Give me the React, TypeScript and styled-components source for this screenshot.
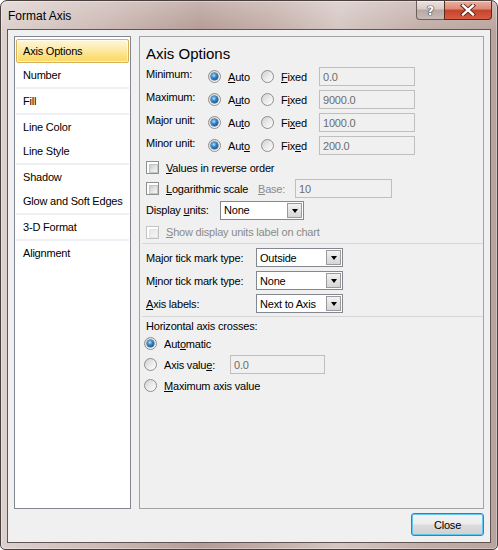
import React from 'react';
import styled, { createGlobalStyle } from 'styled-components';

const GlobalStyle = createGlobalStyle`
  html, body { margin: 0; padding: 0; background: #ffffff; }
  body {
    font-family: "Liberation Sans", Arial, sans-serif;
    font-size: 11px;
    color: #000;
  }
  * { box-sizing: border-box; }
  u { text-decoration: underline; text-underline-offset: 1px; }
`;

const Window = styled.div`
  width: 498px;
  height: 550px;
  border: 1px solid #4a403e;
  border-radius: 7px 7px 5px 5px;
  background:
    linear-gradient(180deg, rgba(255, 255, 255, 0.25) 0px, rgba(255, 255, 255, 0) 30px),
    linear-gradient(90deg, #ddd1ce 0%, #cdbab5 20%, #b59c96 40%, #c4aea8 55%, #d5c6c2 68%, #c2ada7 85%, #b9a39d 100%);
  padding: 0 6px 6px;
  display: flex;
  flex-direction: column;
  box-shadow: inset 0 0 0 1px rgba(255, 255, 255, 0.35);
  letter-spacing: -0.2px;
`;

const TitleBar = styled.div`
  height: 28px;
  display: flex;
  align-items: flex-start;
  justify-content: space-between;
`;

const Title = styled.div`
  font-size: 12px;
  line-height: 14px;
  margin: 8px 0 0 1px;
  letter-spacing: 0;
  color: #000;
`;

const CaptionButtons = styled.div`
  display: flex;
  margin-right: -1px;
`;

const CaptionButton = styled.div<{ $kind: 'help' | 'close' }>`
  height: 19px;
  width: ${(p) => (p.$kind === 'help' ? 28 : 48)}px;
  display: flex;
  align-items: center;
  justify-content: center;
  border: 1px solid ${(p) => (p.$kind === 'help' ? '#6d5d59' : '#5b2a22')};
  border-top: none;
  ${(p) => (p.$kind === 'help' ? 'border-right: none;' : '')}
  border-radius: ${(p) => (p.$kind === 'help' ? '0 0 0 4px' : '0 0 4px 0')};
  background: ${(p) =>
    p.$kind === 'help'
      ? 'linear-gradient(180deg, #ebe3e1 0%, #d8ccc9 45%, #b6a7a3 50%, #c8bcb8 100%)'
      : 'linear-gradient(180deg, #eab0a2 0%, #dc8a77 45%, #c7432c 50%, #d55c43 100%)'};
  box-shadow: inset 0 1px 0 rgba(255, 255, 255, 0.5);
`;

const HelpGlyph = styled.span`
  font-family: "DejaVu Sans", sans-serif;
  font-weight: bold;
  font-size: 13px;
  line-height: 13px;
  color: #fff;
  text-shadow: 0 0 1px #333, 0 0 1px #333, 0 0 1px #333;
`;

const Client = styled.div`
  flex: 1;
  background: #f0f0f0;
  border: 1px solid #5f5654;
  padding: 6px;
  display: flex;
  flex-direction: column;
  gap: 4px;
`;

const Panes = styled.div`
  flex: 1;
  display: flex;
  gap: 8px;
  min-height: 0;
`;

const CategoryList = styled.div`
  width: 117px;
  border: 1px solid #828790;
  background: #fff;
  padding: 2px 1px;
  display: flex;
  flex-direction: column;
`;

const CategoryItem = styled.div<{ $selected?: boolean }>`
  height: 24px;
  display: flex;
  align-items: center;
  padding-left: 6px;
  border: 1px solid ${(p) => (p.$selected ? '#d9b257' : 'transparent')};
  border-radius: 2px;
  background: ${(p) =>
    p.$selected
      ? 'linear-gradient(180deg, #fef7d8 0%, #fdeaa6 45%, #fcde7a 75%, #fbd865 100%)'
      : 'transparent'};
  box-shadow: ${(p) => (p.$selected ? 'inset 0 0 0 1px rgba(255,255,255,0.6)' : 'none')};
`;

const ListSeparator = styled.div`
  height: 2px;
  background: #eceff3;
`;

const OptionsPane = styled.div`
  flex: 1;
  border: 1px solid #a3a3a3;
  padding: 0 6px;
  display: flex;
  flex-direction: column;
`;

const Heading = styled.div`
  margin-top: 6px;
  height: 22px;
  line-height: 22px;
  font-size: 15px;
  letter-spacing: 0;
`;

const Row = styled.div<{ $h: number }>`
  height: ${(p) => p.$h}px;
  display: flex;
  align-items: center;
`;

const FieldLabel = styled.div<{ $w: number; $raise?: boolean; $disabled?: boolean }>`
  width: ${(p) => p.$w}px;
  flex: none;
  white-space: nowrap;
  color: ${(p) => (p.$disabled ? '#8a8a8a' : '#000')};
  margin-bottom: ${(p) => (p.$raise ? 6 : 0)}px;
`;

const Option = styled.label<{ $w?: number; $shift?: number; $disabled?: boolean }>`
  display: flex;
  align-items: center;
  gap: 7px;
  ${(p) => (p.$w ? `width: ${p.$w}px; flex: none;` : '')}
  margin-left: ${(p) => p.$shift ?? 0}px;
  white-space: nowrap;
  color: ${(p) => (p.$disabled ? '#8a8a8a' : '#000')};
`;

const Radio = styled.span<{ $checked?: boolean }>`
  width: 13px;
  height: 13px;
  flex: none;
  border-radius: 50%;
  border: 1px solid #8e8f8f;
  background: linear-gradient(135deg, #cfd0d1 0%, #e9eaea 50%, #ffffff 100%);
  display: flex;
  align-items: center;
  justify-content: center;
  &::after {
    content: '';
    display: ${(p) => (p.$checked ? 'block' : 'none')};
    width: 7px;
    height: 7px;
    border-radius: 50%;
    background: radial-gradient(circle at 40% 35%, #bfe6fb 0%, #3a8fd4 35%, #14508f 75%, #0b3566 100%);
    box-shadow: 0 0 0 0.5px #1d4f80;
  }
`;

const Checkbox = styled.span<{ $disabled?: boolean }>`
  width: 13px;
  height: 13px;
  flex: none;
  border: 1px solid ${(p) => (p.$disabled ? '#c4c4c4' : '#8e8f8f')};
  background: #fff;
  padding: 2px;
  &::after {
    content: '';
    display: block;
    width: 100%;
    height: 100%;
    background: ${(p) =>
      p.$disabled
        ? 'linear-gradient(135deg, #e6e6e6, #f7f7f7)'
        : 'linear-gradient(135deg, #c9cacb 0%, #e2e3e4 50%, #f6f6f6 100%)'};
    border: 1px solid ${(p) => (p.$disabled ? '#e4e4e4' : '#c4c5c6')};
  }
`;

const TextField = styled.div<{ $w: number }>`
  width: ${(p) => p.$w}px;
  height: 19px;
  flex: none;
  border: 1px solid #bfbfbf;
  background: #f0f0f0;
  color: #6d6d6d;
  padding-left: 3px;
  display: flex;
  align-items: center;
`;

const Select = styled.div<{ $w: number }>`
  width: ${(p) => p.$w}px;
  height: 19px;
  flex: none;
  border: 1px solid #828790;
  background: #fff;
  display: flex;
  align-items: center;
  padding: 1px;
`;

const SelectText = styled.div`
  flex: 1;
  padding-left: 2px;
  white-space: nowrap;
  overflow: hidden;
`;

const SelectArrow = styled.div`
  width: 15px;
  height: 15px;
  flex: none;
  border: 1px solid #9a9a9a;
  background: linear-gradient(180deg, #f3f3f3 0%, #e3e3e3 50%, #d6d6d6 100%);
  display: flex;
  align-items: center;
  justify-content: center;
  &::after {
    content: '';
    width: 0;
    height: 0;
    border-left: 3.5px solid transparent;
    border-right: 3.5px solid transparent;
    border-top: 4px solid #000;
    margin-top: 1px;
  }
`;

const PaneSeparator = styled.div<{ $mt: number; $mb: number }>`
  height: 0;
  border-top: 1px solid #d6d6d6;
  margin: ${(p) => p.$mt}px -6px ${(p) => p.$mb}px -4px;
`;

const GroupCaption = styled.div`
  height: 16px;
  line-height: 13px;
  display: flex;
  align-items: flex-end;
`;

const Footer = styled.div`
  display: flex;
  justify-content: flex-end;
`;

const DialogButton = styled.button`
  width: 73px;
  height: 23px;
  border: 1px solid #3c7fb1;
  border-radius: 3px;
  background: linear-gradient(180deg, #f4f4f4 0%, #ececec 48%, #dcdcdc 52%, #d0d0d0 100%);
  box-shadow: inset 0 0 0 1px #62c6f2;
  font-family: "Liberation Sans", Arial, sans-serif;
  font-size: 11px;
  letter-spacing: -0.2px;
  color: #000;
  padding: 0;
`;

const Mn = ({ t, u }: { t: string; u: number }) => (
  <>
    {t.slice(0, u)}
    <u>{t[u]}</u>
    {t.slice(u + 1)}
  </>
);

const categories: string[][] = [
  ['Axis Options', 'Number'],
  ['Fill'],
  ['Line Color', 'Line Style'],
  ['Shadow', 'Glow and Soft Edges'],
  ['3-D Format'],
  ['Alignment'],
];

const bounds = [
  { label: 'Minimum:', auto: 0, fixed: 0, value: '0.0' },
  { label: 'Maximum:', auto: 1, fixed: 1, value: '9000.0' },
  { label: 'Major unit:', auto: 2, fixed: 2, value: '1000.0' },
  { label: 'Minor unit:', auto: 3, fixed: 3, value: '200.0' },
];

const tickRows = [
  { label: 'Major tick mark type:', u: 2, value: 'Outside' },
  { label: 'Minor tick mark type:', u: 1, value: 'None' },
  { label: 'Axis labels:', u: 0, value: 'Next to Axis' },
];

const CloseGlyph = () => (
  <svg width="16" height="12" viewBox="0 0 16 12">
    <path d="M3 1.5 L13 10.5 M13 1.5 L3 10.5" stroke="#5a1e14" strokeWidth="4.2" strokeLinecap="square" />
    <path d="M3 1.5 L13 10.5 M13 1.5 L3 10.5" stroke="#ffffff" strokeWidth="2.4" strokeLinecap="square" />
  </svg>
);

export default function App() {
  return (
    <>
      <GlobalStyle />
      <Window>
        <TitleBar>
          <Title>Format Axis</Title>
          <CaptionButtons>
            <CaptionButton $kind="help">
              <HelpGlyph>?</HelpGlyph>
            </CaptionButton>
            <CaptionButton $kind="close">
              <CloseGlyph />
            </CaptionButton>
          </CaptionButtons>
        </TitleBar>
        <Client>
          <Panes>
            <CategoryList>
              {categories.map((group, gi) => (
                <React.Fragment key={gi}>
                  {gi > 0 && <ListSeparator />}
                  {group.map((name) => (
                    <CategoryItem key={name} $selected={name === 'Axis Options'}>
                      {name}
                    </CategoryItem>
                  ))}
                </React.Fragment>
              ))}
            </CategoryList>
            <OptionsPane>
              <Heading>Axis Options</Heading>
              {bounds.map((b) => (
                <Row $h={23} key={b.label}>
                  <FieldLabel $w={62} $raise>
                    {b.label}
                  </FieldLabel>
                  <Option $w={53}>
                    <Radio $checked />
                    <span>
                      <Mn t="Auto" u={b.auto} />
                    </span>
                  </Option>
                  <Option $w={58}>
                    <Radio />
                    <span>
                      <Mn t="Fixed" u={b.fixed} />
                    </span>
                  </Option>
                  <TextField $w={96}>{b.value}</TextField>
                </Row>
              ))}
              <Row $h={21}>
                <Option>
                  <Checkbox />
                  <span>
                    <Mn t="Values in reverse order" u={0} />
                  </span>
                </Option>
              </Row>
              <Row $h={21}>
                <Option $w={112}>
                  <Checkbox />
                  <span>
                    <Mn t="Logarithmic scale" u={0} />
                  </span>
                </Option>
                <FieldLabel $w={37} $disabled>
                  <Mn t="Base:" u={0} />
                </FieldLabel>
                <TextField $w={97}>10</TextField>
              </Row>
              <Row $h={22}>
                <FieldLabel $w={74}>
                  <Mn t="Display units:" u={8} />
                </FieldLabel>
                <Select $w={84}>
                  <SelectText>None</SelectText>
                  <SelectArrow />
                </Select>
              </Row>
              <Row $h={22}>
                <Option $disabled>
                  <Checkbox $disabled />
                  <span>
                    <Mn t="Show display units label on chart" u={0} />
                  </span>
                </Option>
              </Row>
              <PaneSeparator $mt={0} $mb={2} />
              {tickRows.map((r) => (
                <Row $h={23} key={r.label}>
                  <FieldLabel $w={110}>
                    <Mn t={r.label} u={r.u} />
                  </FieldLabel>
                  <Select $w={87}>
                    <SelectText>{r.value}</SelectText>
                    <SelectArrow />
                  </Select>
                </Row>
              ))}
              <PaneSeparator $mt={1} $mb={0} />
              <GroupCaption>Horizontal axis crosses:</GroupCaption>
              <Row $h={21}>
                <Option $shift={-2}>
                  <Radio $checked />
                  <span>
                    <Mn t="Automatic" u={3} />
                  </span>
                </Option>
              </Row>
              <Row $h={21}>
                <Option $shift={-2} $w={86}>
                  <Radio />
                  <span>
                    <Mn t="Axis value:" u={9} />
                  </span>
                </Option>
                <TextField $w={95}>0.0</TextField>
              </Row>
              <Row $h={21}>
                <Option $shift={-2}>
                  <Radio />
                  <span>
                    <Mn t="Maximum axis value" u={0} />
                  </span>
                </Option>
              </Row>
            </OptionsPane>
          </Panes>
          <Footer>
            <DialogButton>Close</DialogButton>
          </Footer>
        </Client>
      </Window>
    </>
  );
}
